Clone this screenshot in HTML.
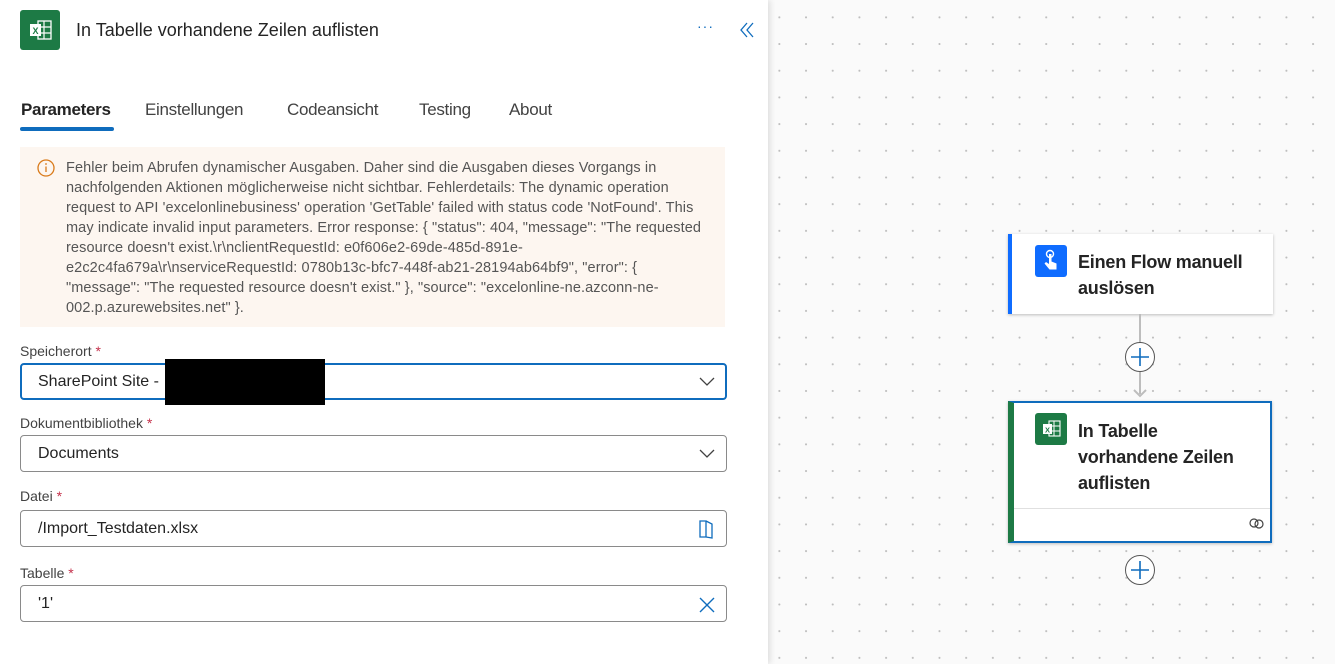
<!DOCTYPE html>
<html><head><meta charset="utf-8"><style>
*{margin:0;padding:0;box-sizing:border-box}
body{width:1335px;height:664px;overflow:hidden;font-family:"Liberation Sans",sans-serif;color:#242424;position:relative;background:#fafafa}
.canvas{position:absolute;left:768px;top:0;right:0;bottom:0;background-color:#fafafa;background-image:radial-gradient(circle,#bdbdbd 0.8px,transparent 1.2px);background-size:26.7px 26.7px;background-position:-2px 4px}
.panel{position:absolute;left:0;top:0;width:768px;height:664px;background:#fff;box-shadow:2px 0 6px rgba(0,0,0,.12)}
.abs{position:absolute}
.tab{position:absolute;top:100px;font-size:17px;color:#424242;letter-spacing:-0.3px}
.err{position:absolute;left:20px;top:147px;width:705px;height:180px;background:#fdf6f0}
.err .t{position:absolute;left:46px;top:11px;font-size:14.5px;line-height:20px;color:#555;letter-spacing:0.1px;white-space:nowrap}
.lbl{position:absolute;left:20px;font-size:14px;color:#424242}
.lbl b{color:#c4314b;font-weight:normal}
.inp{position:absolute;left:20px;width:707px;height:37px;border:1px solid #8a8a8a;border-radius:4px;background:#fff;font-size:16px;color:#242424;padding:9px 0 0 17px}
.card{position:absolute;background:#fff;box-shadow:0 1px 3px rgba(0,0,0,.25)}
.ctext{position:absolute;left:66px;font-size:18px;font-weight:bold;color:#242424;line-height:26px;letter-spacing:-0.2px}
.plus{position:absolute;width:30px;height:30px;border:1px solid #555;border-radius:50%;background:#fff}
</style></head><body>
<div class="canvas"></div>
<div class="panel">
  <div class="abs" style="left:20px;top:10px;width:40px;height:40px;background:#1d7a45;border-radius:3px">
    <svg width="40" height="40" viewBox="0 0 40 40"><rect x="18" y="11" width="13" height="18" fill="none" stroke="#fff" stroke-width="1.3"/><path d="M18 17h13M18 23h13M24 11v18" stroke="#fff" stroke-width="1.2"/><rect x="10" y="14" width="11" height="12" fill="#fff"/><text x="12.5" y="24" font-size="9" font-family="Liberation Sans" fill="#1d7a45" font-weight="bold">X</text></svg>
  </div>
  <div class="abs" style="left:76px;top:20px;font-size:18px;color:#242424;letter-spacing:0">In Tabelle vorhandene Zeilen auflisten</div>
  <div class="abs" style="left:697px;top:18px;font-size:14px;color:#0f6cbd;letter-spacing:1px">···</div>
  <svg class="abs" style="left:738px;top:21px" width="18" height="18" viewBox="0 0 18 18"><path d="M9 2L3 9l6 7M15 2L9 9l6 7" fill="none" stroke="#0f6cbd" stroke-width="1.3"/></svg>
  <div class="tab" style="left:21px;color:#242424;font-weight:bold">Parameters</div>
  <div class="abs" style="left:20px;top:127px;width:94px;height:4px;background:#0f6cbd;border-radius:2px"></div>
  <div class="tab" style="left:145px">Einstellungen</div>
  <div class="tab" style="left:287px">Codeansicht</div>
  <div class="tab" style="left:419px">Testing</div>
  <div class="tab" style="left:509px">About</div>
  <div class="err">
    <svg class="abs" style="left:16px;top:11px" width="20" height="20" viewBox="0 0 20 20"><circle cx="10" cy="10" r="8" fill="none" stroke="#d97a1a" stroke-width="1.3"/><path d="M10 8.5v5.5" stroke="#d97a1a" stroke-width="1.3"/><circle cx="10" cy="6" r="0.9" fill="#d97a1a"/></svg>
    <div class="t">Fehler beim Abrufen dynamischer Ausgaben. Daher sind die Ausgaben dieses Vorgangs in<br>nachfolgenden Aktionen möglicherweise nicht sichtbar. Fehlerdetails: The dynamic operation<br>request to API 'excelonlinebusiness' operation 'GetTable' failed with status code 'NotFound'. This<br>may indicate invalid input parameters. Error response: { "status": 404, "message": "The requested<br>resource doesn't exist.\r\nclientRequestId: e0f606e2-69de-485d-891e-<br>e2c2c4fa679a\r\nserviceRequestId: 0780b13c-bfc7-448f-ab21-28194ab64bf9", "error": {<br>"message": "The requested resource doesn't exist." }, "source": "excelonline-ne.azconn-ne-<br>002.p.azurewebsites.net" }.</div>
  </div>
  <div class="lbl" style="top:343px">Speicherort <b>*</b></div>
  <div class="inp" style="top:363px;border:2px solid #0f6cbd;padding-top:8px;padding-left:16px">SharePoint Site -</div>
  <div class="abs" style="left:165px;top:359px;width:160px;height:46px;background:#000"></div>
  <svg class="abs" style="left:699px;top:375px" width="16" height="12" viewBox="0 0 16 12"><path d="M1 3l7 7 7-7" fill="none" stroke="#424242" stroke-width="1.3"/></svg>
  <div class="lbl" style="top:415px">Dokumentbibliothek <b>*</b></div>
  <div class="inp" style="top:435px">Documents</div>
  <svg class="abs" style="left:699px;top:447px" width="16" height="12" viewBox="0 0 16 12"><path d="M1 3l7 7 7-7" fill="none" stroke="#424242" stroke-width="1.3"/></svg>
  <div class="lbl" style="top:488px">Datei <b>*</b></div>
  <div class="inp" style="top:510px">/Import_Testdaten.xlsx</div>
  <svg class="abs" style="left:697px;top:519px" width="18" height="20" viewBox="0 0 18 20"><path d="M3 2h6v16H3zM9 2l6 3v14l-6-1" fill="none" stroke="#0f6cbd" stroke-width="1.3"/></svg>
  <div class="lbl" style="top:565px">Tabelle <b>*</b></div>
  <div class="inp" style="top:585px">'1'</div>
  <svg class="abs" style="left:698px;top:596px" width="18" height="18" viewBox="0 0 18 18"><path d="M2 2l14 14M16 2L2 16" stroke="#0f6cbd" stroke-width="1.4"/></svg>
</div>

<div class="card" style="left:1008px;top:234px;width:265px;height:80px;border-left:4px solid #0f6cff">
  <div class="abs" style="left:23px;top:11px;width:32px;height:32px;background:#0f6cff;border-radius:3px">
    <svg width="32" height="32" viewBox="0 0 32 32"><circle cx="15" cy="9" r="3.5" fill="none" stroke="#fff" stroke-width="1.4"/><path d="M14 9v10l-3-2-1.5 1.5 5 6h7v-6l-5-2V9z" fill="#fff"/></svg>
  </div>
  <div class="ctext" style="top:15px">Einen Flow manuell<br>auslösen</div>
</div>
<div class="abs" style="left:1139px;top:314px;width:2px;height:30px;background:#bdbdbd"></div>
<div class="plus" style="left:1125px;top:342px"><svg width="28" height="28" viewBox="0 0 28 28"><path d="M14 5v18M5 14h18" stroke="#0f6cbd" stroke-width="1.6"/></svg></div>
<div class="abs" style="left:1139px;top:372px;width:2px;height:22px;background:#bdbdbd"></div>
<svg class="abs" style="left:1132px;top:388px" width="16" height="10" viewBox="0 0 16 10"><path d="M2 2l6 6 6-6" fill="none" stroke="#bdbdbd" stroke-width="2"/></svg>
<div class="card" style="left:1008px;top:401px;width:264px;height:142px;border:2px solid #0f6cbd;border-left:6px solid #1d7a45">
  <div class="abs" style="left:21px;top:10px;width:32px;height:32px;background:#1d7a45;border-radius:3px">
    <svg width="32" height="32" viewBox="0 0 32 32"><rect x="14" y="8" width="11" height="15" fill="none" stroke="#fff" stroke-width="1.1"/><path d="M14 13h11M14 18h11M19 8v15" stroke="#fff" stroke-width="1"/><rect x="8" y="11" width="9" height="10" fill="#fff"/><text x="10" y="19.5" font-size="7.5" font-family="Liberation Sans" fill="#1d7a45" font-weight="bold">X</text></svg>
  </div>
  <div class="ctext" style="left:64px;top:15px">In Tabelle<br>vorhandene Zeilen<br>auflisten</div>
  <div class="abs" style="left:0;right:0;top:105px;height:1px;background:#e0e0e0"></div>
  <svg class="abs" style="left:234px;top:114px" width="18" height="12" viewBox="0 0 18 12"><circle cx="6" cy="6" r="4" fill="none" stroke="#424242" stroke-width="1.2"/><circle cx="11" cy="7" r="4" fill="none" stroke="#424242" stroke-width="1.2"/></svg>
</div>
<div class="plus" style="left:1125px;top:555px"><svg width="28" height="28" viewBox="0 0 28 28"><path d="M14 5v18M5 14h18" stroke="#0f6cbd" stroke-width="1.6"/></svg></div>
</body></html>
